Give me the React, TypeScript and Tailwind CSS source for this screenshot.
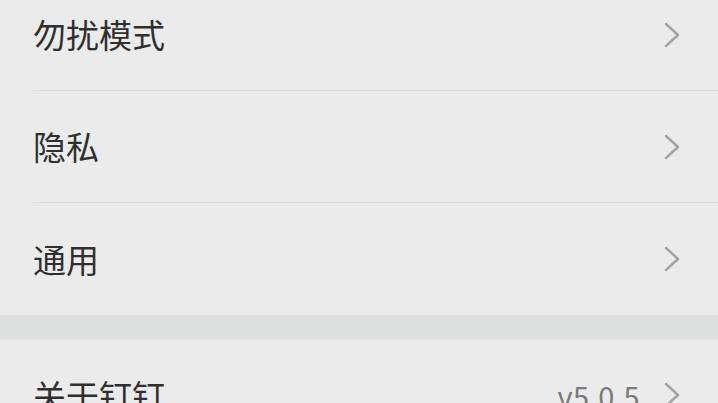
import React from "react";

const Chevron = () => (
  <svg width="16" height="26" viewBox="0 0 16 26" fill="none" className="shrink-0">
    <path d="M2 2 L14 13 L2 24" stroke="#a3a3a3" strokeWidth="2.4" strokeLinecap="round" strokeLinejoin="round" />
  </svg>
);

type Item = { label: string; value?: string };

const Row = ({ item, last }: { item: Item; last?: boolean }) => (
  <div className="h-[112px] pl-[33px]">
    <div
      className={`h-full flex items-center pr-[38px] ${
        last ? "" : "border-b border-[#dcdcdc]"
      }`}
    >
      <span className="flex-1 text-[33px] text-[#2f2f2f] leading-none">{item.label}</span>
      {item.value && (
        <span className="text-[29px] text-[#7a7a7a] mr-[24px] leading-none tracking-[0.5px]">
          {item.value}
        </span>
      )}
      <Chevron />
    </div>
  </div>
);

export default function App() {
  const group1: Item[] = [{ label: "勿扰模式" }, { label: "隐私" }, { label: "通用" }];
  const group2: Item[] = [{ label: "关于钉钉", value: "v5.0.5" }];

  return (
    <div
      className="w-[718px] h-[403px] overflow-hidden bg-[#ebebeb]"
      style={{ fontFamily: '"Noto Sans CJK SC", "Noto Sans", Roboto, sans-serif' }}
    >
      <div className="-mt-[21px]">
        {group1.map((it, i) => (
          <Row key={it.label} item={it} last={i === group1.length - 1} />
        ))}
        <div className="h-[24px] bg-[#dde0df]" />
        {group2.map((it) => (
          <Row key={it.label} item={it} last />
        ))}
      </div>
    </div>
  );
}
